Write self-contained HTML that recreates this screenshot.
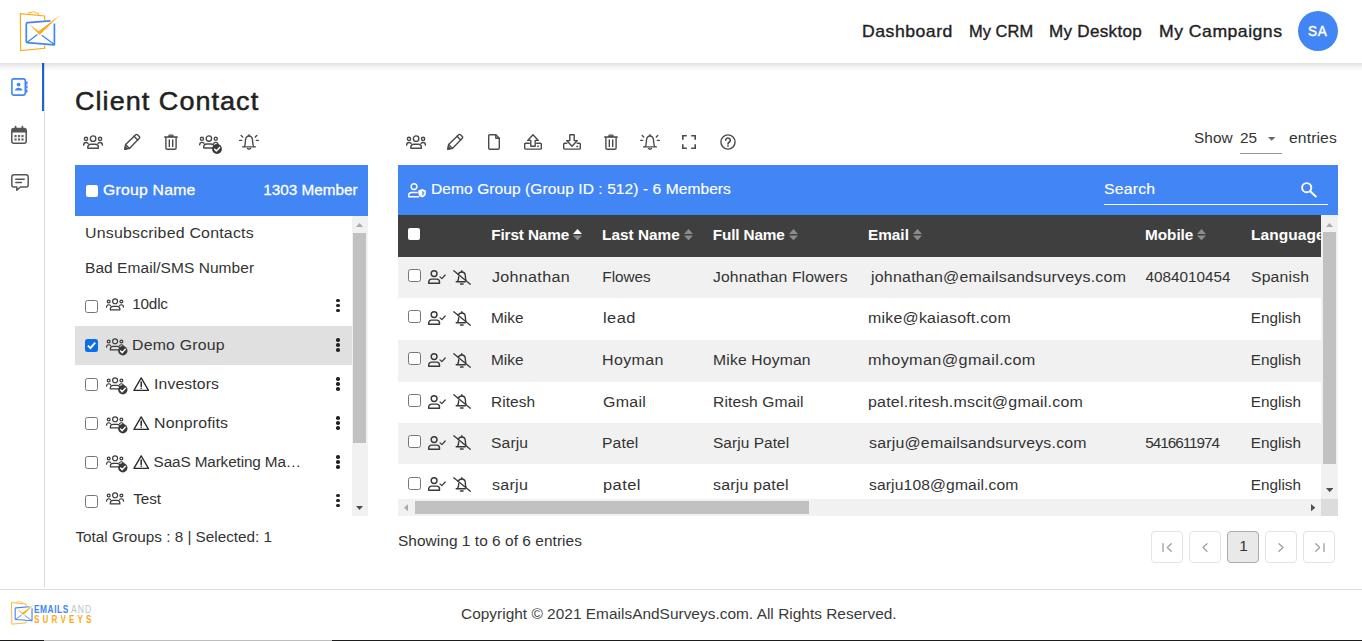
<!DOCTYPE html>
<html lang="en"><head><meta charset="utf-8"><title>Client Contact</title>
<style>
*{box-sizing:border-box;margin:0;padding:0}
html,body{width:1362px;height:641px;overflow:hidden;background:#fff}
body{position:relative;font-family:"Liberation Sans",sans-serif;color:#333}
.abs{position:absolute}
.t{position:absolute;z-index:5;transform-origin:0 0;white-space:pre;line-height:1;display:block}
#header{position:absolute;left:-12px;top:0;width:1386px;height:63px;background:#fff;box-shadow:0 1px 8px rgba(0,0,0,.2);z-index:3}
#avatar{position:absolute;left:1310px;top:11px;width:40px;height:40px;border-radius:50%;background:#4285f4}
#sidebar{position:absolute;left:0;top:63px;width:45px;height:524px;border-right:1px solid #dcdcdc;background:#fff}
#active{position:absolute;left:42.200px;top:63px;width:2.300px;height:48px;background:#1766d1;z-index:2}
.ico{position:absolute;overflow:visible;fill:none;stroke:#4a4a4a;stroke-width:1.4;stroke-linecap:round;stroke-linejoin:round}
.blue{background:#4285f4}
#lhead{position:absolute;left:75px;top:165px;width:293px;height:51px}
#rhead{position:absolute;left:398px;top:165px;width:940px;height:50px}
.cb{position:absolute;width:13px;height:13px;border:1px solid #767676;border-radius:2.5px;background:#fff}
.cbw{position:absolute;width:12px;height:12px;border-radius:2px;background:#fff}
.cbc{position:absolute;width:13px;height:13px;border-radius:2.5px;background:#0b6fe6}
#lsel{position:absolute;left:75px;top:326px;width:277px;height:39px;background:#e0e0e0}
.sbv{position:absolute;background:#f1f1f1}
.thumb{position:absolute;background:#c1c1c1}
.dots{position:absolute;width:4px}
.dots i{display:block;width:3.6px;height:3.6px;border-radius:50%;background:#222;margin-bottom:1.4px}
#thead{position:absolute;left:398px;top:215px;width:923px;height:42px;background:#3f3f3f}
.row{position:absolute;left:398px;width:923px;background:#f1f1f1}
.pg{position:absolute;top:531px;width:32px;height:32px;border:1px solid #e3e3e3;border-radius:4px;background:#fff}
.pg.cur{background:#e9e9e9;border-color:#ababab}
#footer{position:absolute;left:0;top:589px;width:1362px;height:52px;border-top:1px solid #dedede;background:#fff}

</style></head>
<body>
<svg width="0" height="0" style="position:absolute">
 <defs>
  <symbol id="i-users" viewBox="0 0 20 14" overflow="visible">
   <circle cx="10.1" cy="3.65" r="2.75"/>
   <path d="M4.8 13.3v-1a3.1 3.1 0 0 1 3.1-3.1h4.4a3.1 3.1 0 0 1 3.1 3.1v1z"/>
   <circle cx="3" cy="3.9" r="1.6"/><circle cx="17.1" cy="3.9" r="1.6"/>
   <path d="M.6 10.1Q.8 7.5 3 7.5Q4.3 7.5 5.1 8.4"/><path d="M19.5 10.1Q19.3 7.5 17.1 7.5Q15.8 7.5 15 8.4"/>
  </symbol>
  <symbol id="i-pencil" viewBox="0 0 16 16" overflow="visible">
   <path d="M.8 15.2l.8-4.600L11.700.700a1.200 1.200 0 0 1 1.700 0l1.900 1.900a1.200 1.200 0 0 1 0 1.700L5.400 14.400z"/>
   <path d="M1.600 10.600l3.800 3.800M10 2.300l3.700 3.700"/><path d="M.9 15.100l.5-2.300 1.800 1.800z" fill="#4a4a4a"/>
  </symbol>
  <symbol id="i-trash" viewBox="0 0 14 16" overflow="visible">
   <path d="M.7 3h12.6M1.9 3.2V14a1.3 1.3 0 0 0 1.3 1.3h7.6a1.3 1.3 0 0 0 1.3-1.3V3.2"/>
   <path d="M4.6 2.6l.6-1.6h3.6l.6 1.6z" fill="#9c9c9c" stroke-width="1.1"/>
   <path d="M5.3 6v6.6M8.7 6v6.6"/>
  </symbol>
  <symbol id="i-bell" viewBox="0 0 20 16" overflow="visible">
   <path d="M3.6 12.9h12.8M5.2 12.7c1.3-1.6 1-4.2 1.3-6.8C6.8 3.6 8.3 2 10 2s3.200 1.600 3.500 3.900c.3 2.600 0 5.200 1.300 6.800"/>
   <path d="M10 .6V2M8.500 14.500q1.500 1.300 3 0" stroke-width="1.300"/>
   <path d="M.7 6.400h2M17.300 6.400h2M2.200 1.400l1.500 1.500M17.800 1.400l-1.500 1.500"/>
  </symbol>
  <symbol id="i-file" viewBox="0 0 12 16" overflow="visible">
   <path d="M.7 1.800a1.100 1.100 0 0 1 1.100-1.100h6l3.500 3.500v9.900a1.100 1.100 0 0 1-1.100 1.100H1.800a1.100 1.100 0 0 1-1.100-1.100z"/>
   <path d="M7.800.9v3.300h3.300"/>
  </symbol>
  <symbol id="i-upload" viewBox="0 0 18 16" overflow="visible">
   <path d="M1.600 9.300h3.700M12.700 9.300h3.700a.9.9 0 0 1 .9.900v4a.9.900 0 0 1-.9.900H1.600a.9.900 0 0 1-.9-.9v-4a.9.900 0 0 1 .9-.9"/>
   <path d="M9 .8l5.300 5.600h-3.100v5.800H6.800V6.400H3.700z"/>
   <path d="M13.700 12.300h.6" />
  </symbol>
  <symbol id="i-download" viewBox="0 0 18 16" overflow="visible">
   <path d="M1.600 9.300h2.200M14.200 9.300h2.200a.9.900 0 0 1 .9.900v4a.9.900 0 0 1-.9.900H1.600a.9.900 0 0 1-.9-.9v-4a.9.900 0 0 1 .9-.9"/>
   <path d="M9 12.200L3.700 6.600h3.100V.8h4.400v5.800h3.100z"/>
   <path d="M13.900 12.500h.6" />
  </symbol>
  <symbol id="i-full" viewBox="0 0 14 14" overflow="visible">
   <path d="M.8 4.800V.8h4M9.200.8h4v4M13.200 9.200v4h-4M4.800 13.200h-4v-4" stroke-linecap="butt" stroke-linejoin="miter"/>
  </symbol>
  <symbol id="i-help" viewBox="0 0 16 16" overflow="visible">
   <circle cx="8" cy="8" r="7.100"/>
   <path d="M5.700 6.300a2.300 2.300 0 1 1 3.500 2c-.8.500-1.200.9-1.200 1.800" stroke-width="1.600"/>
   <circle cx="8" cy="12.100" r=".9" fill="#4a4a4a" stroke="none"/>
  </symbol>
  <symbol id="i-badge" viewBox="0 0 10 10" overflow="visible">
   <circle cx="5" cy="5" r="4.900" fill="#3a3a3a" stroke="none"/>
   <path d="M2.700 5.200l1.700 1.700L7.600 3.500" stroke="#fff" stroke-width="1.500" fill="none"/>
  </symbol>
  <symbol id="i-warn" viewBox="0 0 16 14" overflow="visible">
   <path d="M8 .9L15.100 13H.9z" stroke-width="1.300"/>
   <path d="M8 5v4.200" stroke-width="1.500"/><circle cx="8" cy="11" r=".8" fill="#333" stroke="none"/>
  </symbol>
  <symbol id="i-ucheck" viewBox="0 0 18 14" overflow="visible">
   <circle cx="6.100" cy="3.600" r="2.900"/>
   <path d="M.7 13.200v-1.300a2.800 2.800 0 0 1 2.800-2.800h5.200a2.800 2.800 0 0 1 2.800 2.800v1.300z"/>
   <path d="M12 6.800l1.900 1.900L17.200 5" stroke-width="1.200"/>
  </symbol>
  <symbol id="i-belloff" viewBox="0 0 18 15" overflow="visible">
   <path d="M5.200 4.600C5.700 3 7.200 2 8.800 2c2 0 3.300 1.500 3.500 3.500.2 1.700.1 3.300.6 4.700M12.300 11.700H3.200M4.600 11.500c1-1.300 1-3 1.100-4.800"/>
   <path d="M8.800.7V2M7.500 14h2.600"/>
   <path d="M.8.800l16.500 13.400" stroke-width="1.300"/>
  </symbol>
 </defs>
</svg>

<div id="header">
 <svg class="abs" style="left:30px;top:8px" width="46" height="46" viewBox="18 8 46 46">
  <path d="M20.300 13.600L20.700 50.500L44.600 48.300V45.500M44.600 20.500V16L20.300 13.600" fill="none" stroke="#fbab18" stroke-width="1.200" stroke-linejoin="miter"/>
  <path d="M28.600 14.200l.3-1.900 3.100.3c.3-1.500 2.700-1.300 2.900.3l3.600.4.300 1.800" fill="none" stroke="#fbab18" stroke-width=".9"/>
  <path d="M50.400 20.800L27.600 22.700Q26.300 22.900 26.300 24.200V41.400Q26.300 42.500 27.400 42.600L54.400 44.800V23.500" fill="none" stroke="#4285f4" stroke-width="1.700" stroke-linejoin="round"/>
  <path d="M27.200 42.300L37.400 34.600M54 44.300L41.800 35.200" fill="none" stroke="#4285f4" stroke-width="1.300"/>
  <path d="M28.800 23.600L38.600 31.200L59.800 15.300L39.600 35z" fill="#fbab18"/>
 </svg>
 <div id="avatar"></div>
</div>

<div id="sidebar"></div>
<div id="active"></div>
<!-- sidebar icons -->
<svg class="ico" style="left:11px;top:78px;stroke:#4285f4;stroke-width:1.600" width="17" height="18" viewBox="0 0 17 18">
 <rect x=".9" y=".9" width="13.400" height="16.200" rx="2"/>
 <path d="M15.800 4v2M15.800 8v2M15.800 12v2" stroke-width="1.500"/>
 <circle cx="7.600" cy="6.600" r="1.900" fill="#4285f4" stroke="none"/>
 <path d="M4 12.600c0-2 1.600-2.800 3.600-2.800s3.600.8 3.600 2.800z" fill="#4285f4" stroke="none"/>
</svg>
<svg class="ico" style="left:11px;top:126px;stroke:#555;stroke-width:1.500" width="16" height="18" viewBox="0 0 16 18">
 <rect x=".8" y="2.600" width="14.400" height="14.600" rx="2"/>
 <path d="M.8 5.800h14.400" />
 <path d="M1.200 3h13.600v2.600H1.200z" fill="#555" stroke="none"/>
 <path d="M4.600.6v3M11.400.6v3" stroke-width="1.700"/>
 <g fill="#666" stroke="none"><rect x="3.400" y="9" width="2.200" height="2.200"/><rect x="6.900" y="9" width="2.200" height="2.200"/><rect x="10.400" y="9" width="2.200" height="2.200"/><rect x="3.400" y="12.400" width="2.200" height="2.200"/><rect x="6.900" y="12.400" width="2.200" height="2.200"/><rect x="10.400" y="12.400" width="2.200" height="2.200"/></g>
</svg>
<svg class="ico" style="left:11px;top:173.500px;stroke:#555;stroke-width:1.500" width="18" height="17" viewBox="0 0 18 17">
 <path d="M2.800.8h12.400a2 2 0 0 1 2 2v8.200a2 2 0 0 1-2 2H9.400L5.800 16.200V13h-3a2 2 0 0 1-2-2V2.800a2 2 0 0 1 2-2z"/>
 <path d="M4.800 5.200h8.400M4.800 8.400h5.600"/>
</svg>

<!-- left toolbar -->
<svg class="ico" style="left:83px;top:134.600px" width="20" height="14"><use href="#i-users"/></svg>
<svg class="ico" style="left:124px;top:134px" width="16" height="16"><use href="#i-pencil"/></svg>
<svg class="ico" style="left:164px;top:134px" width="14" height="16"><use href="#i-trash"/></svg>
<svg class="ico" style="left:199.300px;top:134.600px" width="19.600" height="13.700"><use href="#i-users"/></svg>
<svg class="ico" style="left:211.900px;top:144.100px" width="10" height="10"><use href="#i-badge"/></svg>
<svg class="ico" style="left:239px;top:134px" width="20" height="16"><use href="#i-bell"/></svg>

<!-- left panel -->
<div id="lhead" class="blue"></div>
<div class="cbw" style="left:85.600px;top:184.700px"></div>
<div id="lsel"></div>
<div class="sbv" style="left:351.500px;top:216px;width:16.500px;height:300px"></div>
<div class="thumb" style="left:352.800px;top:233px;width:13.300px;height:210px"></div>
<svg class="abs" style="left:355.800px;top:223px" width="7" height="4"><path d="M0 4L3.500 0L7 4z" fill="#a9a9a9"/></svg>
<svg class="abs" style="left:355.800px;top:506px" width="7" height="4"><path d="M0 0L3.500 4L7 0z" fill="#505050"/></svg>

<div id="listicons">
<div class="cb" style="left:85px;top:299.9px"></div>
<svg class="ico" style="left:106.2px;top:297.6px;stroke-width:1.35;stroke:#3c3c3c" width="18" height="12.600"><use href="#i-users"/></svg>
<div class="dots" style="left:336.400px;top:298.6px"><i></i><i></i><i></i></div>
<div class="cbc" style="left:85px;top:338.7px"><svg width="13" height="13" viewBox="0 0 13 13" style="position:absolute;left:0;top:0"><path d="M2.900 6.700l2.500 2.500L10.200 3.600" fill="none" stroke="#fff" stroke-width="1.900"/></svg></div>
<svg class="ico" style="left:106.2px;top:338.3px;stroke-width:1.35;stroke:#3c3c3c" width="18" height="12.600"><use href="#i-users"/></svg>
<svg class="ico" style="left:117.700px;top:345.6px" width="9.600" height="9.600"><use href="#i-badge"/></svg>
<div class="dots" style="left:336.400px;top:338.2px"><i></i><i></i><i></i></div>
<div class="cb" style="left:85px;top:377.8px"></div>
<svg class="ico" style="left:106.2px;top:377.4px;stroke-width:1.35;stroke:#3c3c3c" width="18" height="12.600"><use href="#i-users"/></svg>
<svg class="ico" style="left:117.700px;top:384.7px" width="9.600" height="9.600"><use href="#i-badge"/></svg>
<svg class="ico" style="left:132.700px;top:376.6px;stroke:#2a2a2a" width="16.400" height="14.350"><use href="#i-warn"/></svg>
<div class="dots" style="left:336.400px;top:377.3px"><i></i><i></i><i></i></div>
<div class="cb" style="left:85px;top:416.8px"></div>
<svg class="ico" style="left:106.2px;top:416.4px;stroke-width:1.35;stroke:#3c3c3c" width="18" height="12.600"><use href="#i-users"/></svg>
<svg class="ico" style="left:117.700px;top:423.7px" width="9.600" height="9.600"><use href="#i-badge"/></svg>
<svg class="ico" style="left:132.700px;top:415.6px;stroke:#2a2a2a" width="16.400" height="14.350"><use href="#i-warn"/></svg>
<div class="dots" style="left:336.400px;top:416.3px"><i></i><i></i><i></i></div>
<div class="cb" style="left:85px;top:455.8px"></div>
<svg class="ico" style="left:106.2px;top:455.4px;stroke-width:1.35;stroke:#3c3c3c" width="18" height="12.600"><use href="#i-users"/></svg>
<svg class="ico" style="left:117.700px;top:462.7px" width="9.600" height="9.600"><use href="#i-badge"/></svg>
<svg class="ico" style="left:132.700px;top:454.6px;stroke:#2a2a2a" width="16.400" height="14.350"><use href="#i-warn"/></svg>
<div class="dots" style="left:336.400px;top:455.3px"><i></i><i></i><i></i></div>
<div class="cb" style="left:85px;top:494.6px"></div>
<svg class="ico" style="left:106.2px;top:492.4px;stroke-width:1.35;stroke:#3c3c3c" width="18" height="12.600"><use href="#i-users"/></svg>
<div class="dots" style="left:336.400px;top:493.6px"><i></i><i></i><i></i></div>
</div>

<!-- right toolbar -->
<svg class="ico" style="left:406px;top:134.600px" width="20" height="14"><use href="#i-users"/></svg>
<svg class="ico" style="left:447px;top:134px" width="16" height="16"><use href="#i-pencil"/></svg>
<svg class="ico" style="left:488px;top:134.200px" width="12" height="16"><use href="#i-file"/></svg>
<svg class="ico" style="left:524px;top:134px" width="18" height="16"><use href="#i-upload"/></svg>
<svg class="ico" style="left:563px;top:134px" width="18" height="16"><use href="#i-download"/></svg>
<svg class="ico" style="left:604px;top:134px" width="14" height="16"><use href="#i-trash"/></svg>
<svg class="ico" style="left:640px;top:134px" width="20" height="16"><use href="#i-bell"/></svg>
<svg class="ico" style="left:682px;top:135.200px;stroke-width:1.600" width="14" height="14"><use href="#i-full"/></svg>
<svg class="ico" style="left:720px;top:133.800px" width="16" height="16"><use href="#i-help"/></svg>

<!-- show entries -->
<svg class="abs" style="left:1267.500px;top:137.400px" width="8" height="4"><path d="M0 0h7.400L3.700 3.800z" fill="#666"/></svg>
<div class="abs" style="left:1240px;top:152.600px;width:42px;height:1px;background:#949494"></div>

<!-- right panel -->
<div id="rhead" class="blue"></div>
<svg class="ico" style="left:408px;top:182.800px;stroke:#fff;stroke-width:1.400" width="18" height="14.500" viewBox="0 0 18 14.500">
 <circle cx="6" cy="3.600" r="2.900"/>
 <path d="M.7 13.700v-1.400a2.800 2.800 0 0 1 2.800-2.800h5.700M.7 13.700h9.900"/>
 <path d="M14.100 6.100l3.800 1.400v2.700c0 2.100-1.600 3.500-3.800 4.300-2.200-.8-3.800-2.200-3.800-4.300V7.500z" fill="#fff" stroke="none"/>
 <path d="M14.100 7.900v4.800c1.200-.5 2.200-1.400 2.200-2.700V8.700z" fill="#6fa3f7" stroke="none"/>
</svg>
<div class="abs" style="left:1104px;top:203.500px;width:224px;height:1.300px;background:#fff"></div>
<svg class="ico" style="left:1300.500px;top:182.300px;stroke:#fff;stroke-width:1.900" width="16" height="15" viewBox="0 0 16 15"><circle cx="5.700" cy="5.700" r="4.600"/><path d="M9.200 9.200l5.600 5.200" stroke-width="2.100"/></svg>

<div id="thead"></div>
<div class="cbw" style="left:408.400px;top:227.500px"></div>
<div class="row" style="top:257px;height:41.400px"></div>
<div class="row" style="top:339.900px;height:41.700px"></div>
<div class="row" style="top:422.900px;height:41.600px"></div>

<div id="rowicons">
<div class="cb" style="left:408.2px;top:269.3px"></div>
<svg class="ico" style="left:428.4px;top:270.0px;stroke:#383838;stroke-width:1.45" width="18" height="14"><use href="#i-ucheck"/></svg>
<svg class="ico" style="left:453.4px;top:269.5px;stroke:#383838;stroke-width:1.4" width="18" height="15"><use href="#i-belloff"/></svg>
<div class="cb" style="left:408.2px;top:310.3px"></div>
<svg class="ico" style="left:428.4px;top:311.0px;stroke:#383838;stroke-width:1.45" width="18" height="14"><use href="#i-ucheck"/></svg>
<svg class="ico" style="left:453.4px;top:310.5px;stroke:#383838;stroke-width:1.4" width="18" height="15"><use href="#i-belloff"/></svg>
<div class="cb" style="left:408.2px;top:352.3px"></div>
<svg class="ico" style="left:428.4px;top:353.0px;stroke:#383838;stroke-width:1.45" width="18" height="14"><use href="#i-ucheck"/></svg>
<svg class="ico" style="left:453.4px;top:352.5px;stroke:#383838;stroke-width:1.4" width="18" height="15"><use href="#i-belloff"/></svg>
<div class="cb" style="left:408.2px;top:394.1px"></div>
<svg class="ico" style="left:428.4px;top:394.8px;stroke:#383838;stroke-width:1.45" width="18" height="14"><use href="#i-ucheck"/></svg>
<svg class="ico" style="left:453.4px;top:394.3px;stroke:#383838;stroke-width:1.4" width="18" height="15"><use href="#i-belloff"/></svg>
<div class="cb" style="left:408.2px;top:435.2px"></div>
<svg class="ico" style="left:428.4px;top:435.9px;stroke:#383838;stroke-width:1.45" width="18" height="14"><use href="#i-ucheck"/></svg>
<svg class="ico" style="left:453.4px;top:435.4px;stroke:#383838;stroke-width:1.4" width="18" height="15"><use href="#i-belloff"/></svg>
<div class="cb" style="left:408.2px;top:476.7px"></div>
<svg class="ico" style="left:428.4px;top:477.4px;stroke:#383838;stroke-width:1.45" width="18" height="14"><use href="#i-ucheck"/></svg>
<svg class="ico" style="left:453.4px;top:476.9px;stroke:#383838;stroke-width:1.4" width="18" height="15"><use href="#i-belloff"/></svg>
</div>
<div id="sorticons">
<svg class="abs" style="left:573.4px;top:229px" width="9" height="11.4" viewBox="0 0 9 11.4"><path d="M0 5L4.500 0L9 5z" fill="#fff"/><path d="M0 6.400L4.500 11.400L9 6.400z" fill="#8c8c8c"/></svg>
<svg class="abs" style="left:683.6px;top:229px" width="9" height="11.4" viewBox="0 0 9 11.4"><path d="M0 5L4.500 0L9 5z" fill="#8c8c8c"/><path d="M0 6.400L4.500 11.400L9 6.400z" fill="#8c8c8c"/></svg>
<svg class="abs" style="left:789.2px;top:229px" width="9" height="11.4" viewBox="0 0 9 11.4"><path d="M0 5L4.500 0L9 5z" fill="#8c8c8c"/><path d="M0 6.400L4.500 11.400L9 6.400z" fill="#8c8c8c"/></svg>
<svg class="abs" style="left:912.5px;top:229px" width="9" height="11.4" viewBox="0 0 9 11.4"><path d="M0 5L4.500 0L9 5z" fill="#8c8c8c"/><path d="M0 6.400L4.500 11.400L9 6.400z" fill="#8c8c8c"/></svg>
<svg class="abs" style="left:1197.2px;top:229px" width="9" height="11.4" viewBox="0 0 9 11.4"><path d="M0 5L4.500 0L9 5z" fill="#8c8c8c"/><path d="M0 6.400L4.500 11.400L9 6.400z" fill="#8c8c8c"/></svg>
</div>

<!-- scrollbars -->
<div class="sbv" style="left:1321px;top:215px;width:17px;height:284px"></div>
<div class="thumb" style="left:1323.300px;top:232.300px;width:12.700px;height:231.400px"></div>
<svg class="abs" style="left:1326.200px;top:222.600px" width="7" height="4"><path d="M0 4L3.500 0L7 4z" fill="#a9a9a9"/></svg>
<svg class="abs" style="left:1326px;top:487.600px" width="7.400" height="4.200"><path d="M0 0L3.700 4.200L7.400 0z" fill="#505050"/></svg>
<div class="sbv" style="left:398px;top:499px;width:923px;height:17px"></div>
<div class="abs" style="left:1321px;top:499px;width:17px;height:17px;background:#dcdcdc"></div>
<div class="thumb" style="left:414.800px;top:501.300px;width:394.500px;height:12.400px"></div>
<svg class="abs" style="left:404px;top:504px" width="4.200" height="7.400"><path d="M4.200 0L0 3.700L4.200 7.400z" fill="#a9a9a9"/></svg>
<svg class="abs" style="left:1310.800px;top:504px" width="4.200" height="7.400"><path d="M0 0L4.200 3.700L0 7.400z" fill="#505050"/></svg>

<!-- pagination -->
<div class="pg" style="left:1151px"></div>
<div class="pg" style="left:1189px"></div>
<div class="pg cur" style="left:1227px"></div>
<div class="pg" style="left:1265px"></div>
<div class="pg" style="left:1303px"></div>
<svg class="ico" style="left:1161.700px;top:542.600px;stroke:#9e9e9e;stroke-width:1.300" width="11" height="9" viewBox="0 0 11 9"><path d="M1 .6v7.800M9.300 .8L5.300 4.500l4 3.700"/></svg>
<svg class="ico" style="left:1202px;top:542.600px;stroke:#9e9e9e;stroke-width:1.300" width="6" height="9" viewBox="0 0 6 9"><path d="M5 .8L1 4.500l4 3.700"/></svg>
<svg class="ico" style="left:1278px;top:542.600px;stroke:#9e9e9e;stroke-width:1.300" width="6" height="9" viewBox="0 0 6 9"><path d="M1 .8L5 4.500L1 8.200"/></svg>
<svg class="ico" style="left:1313.800px;top:542.600px;stroke:#9e9e9e;stroke-width:1.300" width="11" height="9" viewBox="0 0 11 9"><path d="M10 .6v7.800M1.700 .8l4 3.700-4 3.700"/></svg>

<div id="footer"></div>
<svg class="abs" style="left:9px;top:599px" width="30" height="28" viewBox="0 0 30 28">
 <g transform="translate(10.900 602.100) scale(.595) translate(-20.200 -13.500) translate(-15.130 -1006.900)" >
 </g>
 <g transform="translate(2.500 3.500) scale(.6 .585) translate(-20.200 -13.500)">
  <path d="M20.300 13.600L20.700 50.500L44.600 48.300V45.500M44.600 20.500V16L20.300 13.600" fill="none" stroke="#fbab18" stroke-width="1.400"/>
  <path d="M28.600 14.200l.3-1.900 3.100.3c.3-1.500 2.700-1.300 2.900.3l3.600.4.300 1.800" fill="none" stroke="#fbab18" stroke-width=".9"/>
  <path d="M50.400 20.800L27.600 22.700Q26.300 22.900 26.300 24.200V41.400Q26.300 42.500 27.400 42.600L54.400 44.800V23.500" fill="none" stroke="#4285f4" stroke-width="1.900" stroke-linejoin="round"/>
  <path d="M27.200 42.300L37.400 34.600M54 44.300L41.800 35.200" fill="none" stroke="#4285f4" stroke-width="1.400"/>
  <path d="M28.800 23.600L38.600 31.200L59.800 15.300L39.600 35z" fill="#fbab18"/>
 </g>
</svg>
<div class="abs" style="left:0;top:640px;width:1362px;height:1px;background:#1d1d1d"></div>
<div class="abs" style="left:44px;top:640px;width:288px;height:1px;background:#bdbdbd"></div>

<div id="texts">
<span class="t" style="left:861.95px;top:23.42px;font-size:16.4px;letter-spacing:0.472px;color:#222;-webkit-text-stroke:0.35px #222;transform:scaleX(1.0761);">Dashboard</span>
<span class="t" style="left:969.23px;top:23.42px;font-size:16.4px;letter-spacing:0.036px;color:#222;-webkit-text-stroke:0.35px #222;transform:scaleX(1.0043);">My CRM</span>
<span class="t" style="left:1049.03px;top:23.42px;font-size:16.4px;letter-spacing:0.265px;color:#222;-webkit-text-stroke:0.35px #222;transform:scaleX(1.0431);">My Desktop</span>
<span class="t" style="left:1158.75px;top:23.42px;font-size:16.4px;letter-spacing:0.462px;color:#222;-webkit-text-stroke:0.35px #222;transform:scaleX(1.0750);">My Campaigns</span>
<span class="t" style="left:1308.33px;top:24.41px;font-size:14.4px;letter-spacing:0.781px;color:#fff;-webkit-text-stroke:0.45px #fff;transform:scaleX(0.9400);">SA</span>
<span class="t" style="left:75.12px;top:89.24px;font-size:25.0px;letter-spacing:0.967px;color:#212121;-webkit-text-stroke:0.5px #212121;transform:scaleX(1.0800);">Client Contact</span>
<span class="t" style="left:103.05px;top:182.05px;font-size:15.3px;letter-spacing:0.203px;color:#fff;-webkit-text-stroke:0.3px #fff;transform:scaleX(1.0323);">Group Name</span>
<span class="t" style="left:263.21px;top:182.05px;font-size:15.3px;letter-spacing:-0.004px;color:#fff;-webkit-text-stroke:0.3px #fff;">1303 Member</span>
<span class="t" style="left:85.14px;top:225.05px;font-size:15.3px;letter-spacing:0.202px;color:#333;transform:scaleX(1.0399);">Unsubscribed Contacts</span>
<span class="t" style="left:85.09px;top:260.05px;font-size:15.3px;letter-spacing:0.068px;color:#333;transform:scaleX(1.0119);">Bad Email/SMS Number</span>
<span class="t" style="left:132.24px;top:296.30px;font-size:15.3px;letter-spacing:-0.204px;color:#333;">10dlc</span>
<span class="t" style="left:132.04px;top:336.95px;font-size:15.3px;letter-spacing:0.219px;color:#333;transform:scaleX(1.0350);">Demo Group</span>
<span class="t" style="left:153.58px;top:376.05px;font-size:15.3px;letter-spacing:0.138px;color:#333;transform:scaleX(1.0274);">Investors</span>
<span class="t" style="left:153.83px;top:415.05px;font-size:15.3px;letter-spacing:0.184px;color:#333;transform:scaleX(1.0370);">Nonprofits</span>
<span class="t" style="left:153.57px;top:454.05px;font-size:15.3px;letter-spacing:-0.120px;color:#333;">SaaS Marketing Ma…</span>
<span class="t" style="left:133.13px;top:491.05px;font-size:15.3px;letter-spacing:-0.063px;color:#333;">Test</span>
<span class="t" style="left:75.44px;top:528.85px;font-size:15.3px;letter-spacing:-0.015px;color:#333;">Total Groups : 8 | Selected: 1</span>
<span class="t" style="left:1193.53px;top:130.35px;font-size:15.3px;letter-spacing:0.040px;color:#333;transform:scaleX(1.0047);">Show</span>
<span class="t" style="left:1240.30px;top:130.35px;font-size:15.3px;letter-spacing:0.033px;color:#333;transform:scaleX(1.0029);">25</span>
<span class="t" style="left:1289.35px;top:130.35px;font-size:15.3px;letter-spacing:0.120px;color:#333;transform:scaleX(1.0240);">entries</span>
<span class="t" style="left:431.17px;top:181.45px;font-size:15.3px;letter-spacing:0.077px;color:#fff;-webkit-text-stroke:0.15px #fff;transform:scaleX(1.0152);">Demo Group (Group ID : 512) - 6 Members</span>
<span class="t" style="left:1104.36px;top:181.45px;font-size:15.3px;letter-spacing:0.204px;color:#fff;-webkit-text-stroke:0.15px #fff;transform:scaleX(1.0326);">Search</span>
<span class="t" style="left:491.29px;top:227.25px;font-size:15.3px;letter-spacing:-0.126px;color:#fff;font-weight:700;">First Name</span>
<span class="t" style="left:602.09px;top:227.25px;font-size:15.3px;letter-spacing:0.022px;color:#fff;font-weight:700;transform:scaleX(1.0034);">Last Name</span>
<span class="t" style="left:712.75px;top:227.25px;font-size:15.3px;letter-spacing:-0.140px;color:#fff;font-weight:700;">Full Name</span>
<span class="t" style="left:868.30px;top:227.25px;font-size:15.3px;letter-spacing:0.007px;color:#fff;font-weight:700;transform:scaleX(1.0011);">Email</span>
<span class="t" style="left:1145.10px;top:227.25px;font-size:15.3px;letter-spacing:-0.043px;color:#fff;font-weight:700;">Mobile</span>
<span class="t" style="left:1250.50px;top:227.25px;font-size:15.3px;letter-spacing:0.073px;color:#fff;font-weight:700;width:69.0px;overflow:hidden;transform:scaleX(1.0108);">Language</span>
<span class="t" style="left:491.95px;top:269.45px;font-size:15.3px;letter-spacing:0.292px;color:#333;transform:scaleX(1.0516);">Johnathan</span>
<span class="t" style="left:602.36px;top:269.45px;font-size:15.3px;letter-spacing:-0.048px;color:#333;">Flowes</span>
<span class="t" style="left:713.37px;top:269.45px;font-size:15.3px;letter-spacing:0.130px;color:#333;transform:scaleX(1.0246);">Johnathan Flowers</span>
<span class="t" style="left:870.50px;top:269.45px;font-size:15.3px;letter-spacing:0.220px;color:#333;transform:scaleX(1.0419);">johnathan@emailsandsurveys.com</span>
<span class="t" style="left:1145.57px;top:269.45px;font-size:15.3px;letter-spacing:-0.015px;color:#333;">4084010454</span>
<span class="t" style="left:1250.90px;top:269.45px;font-size:15.3px;letter-spacing:0.176px;color:#333;transform:scaleX(1.0295);">Spanish</span>
<span class="t" style="left:491.22px;top:310.45px;font-size:15.3px;letter-spacing:0.042px;color:#333;transform:scaleX(1.0060);">Mike</span>
<span class="t" style="left:602.50px;top:310.45px;font-size:15.3px;letter-spacing:0.435px;color:#333;transform:scaleX(1.0726);">lead</span>
<span class="t" style="left:868.30px;top:310.45px;font-size:15.3px;letter-spacing:0.216px;color:#333;transform:scaleX(1.0403);">mike@kaiasoft.com</span>
<span class="t" style="left:1250.76px;top:310.45px;font-size:15.3px;letter-spacing:0.004px;color:#333;">English</span>
<span class="t" style="left:491.22px;top:352.45px;font-size:15.3px;letter-spacing:0.042px;color:#333;transform:scaleX(1.0060);">Mike</span>
<span class="t" style="left:602.20px;top:352.45px;font-size:15.3px;letter-spacing:0.344px;color:#333;transform:scaleX(1.0474);">Hoyman</span>
<span class="t" style="left:712.85px;top:352.45px;font-size:15.3px;letter-spacing:0.157px;color:#333;transform:scaleX(1.0259);">Mike Hoyman</span>
<span class="t" style="left:868.30px;top:352.45px;font-size:15.3px;letter-spacing:0.353px;color:#333;transform:scaleX(1.0589);">mhoyman@gmail.com</span>
<span class="t" style="left:1250.76px;top:352.45px;font-size:15.3px;letter-spacing:0.004px;color:#333;">English</span>
<span class="t" style="left:491.22px;top:394.25px;font-size:15.3px;letter-spacing:0.050px;color:#333;transform:scaleX(1.0088);">Ritesh</span>
<span class="t" style="left:602.50px;top:394.25px;font-size:15.3px;letter-spacing:0.278px;color:#333;transform:scaleX(1.0436);">Gmail</span>
<span class="t" style="left:712.89px;top:394.25px;font-size:15.3px;letter-spacing:0.107px;color:#333;transform:scaleX(1.0207);">Ritesh Gmail</span>
<span class="t" style="left:868.30px;top:394.25px;font-size:15.3px;letter-spacing:0.211px;color:#333;transform:scaleX(1.0445);">patel.ritesh.mscit@gmail.com</span>
<span class="t" style="left:1250.76px;top:394.25px;font-size:15.3px;letter-spacing:0.004px;color:#333;">English</span>
<span class="t" style="left:490.51px;top:435.35px;font-size:15.3px;letter-spacing:0.127px;color:#333;transform:scaleX(1.0217);">Sarju</span>
<span class="t" style="left:602.25px;top:435.35px;font-size:15.3px;letter-spacing:0.135px;color:#333;transform:scaleX(1.0238);">Patel</span>
<span class="t" style="left:712.94px;top:435.35px;font-size:15.3px;letter-spacing:0.054px;color:#333;transform:scaleX(1.0109);">Sarju Patel</span>
<span class="t" style="left:869.45px;top:435.35px;font-size:15.3px;letter-spacing:0.205px;color:#333;transform:scaleX(1.0392);">sarju@emailsandsurveys.com</span>
<span class="t" style="left:1145.22px;top:435.35px;font-size:15.3px;letter-spacing:-1.004px;color:#333;">5416611974</span>
<span class="t" style="left:1250.76px;top:435.35px;font-size:15.3px;letter-spacing:0.004px;color:#333;">English</span>
<span class="t" style="left:491.85px;top:476.85px;font-size:15.3px;letter-spacing:0.258px;color:#333;transform:scaleX(1.0489);">sarju</span>
<span class="t" style="left:602.50px;top:476.85px;font-size:15.3px;letter-spacing:0.394px;color:#333;transform:scaleX(1.0767);">patel</span>
<span class="t" style="left:713.25px;top:476.85px;font-size:15.3px;letter-spacing:0.193px;color:#333;transform:scaleX(1.0428);">sarju patel</span>
<span class="t" style="left:869.46px;top:476.85px;font-size:15.3px;letter-spacing:0.126px;color:#333;transform:scaleX(1.0229);">sarju108@gmail.com</span>
<span class="t" style="left:1250.76px;top:476.85px;font-size:15.3px;letter-spacing:0.004px;color:#333;">English</span>
<span class="t" style="left:398.13px;top:533.15px;font-size:15.3px;letter-spacing:0.042px;color:#333;transform:scaleX(1.0091);">Showing 1 to 6 of 6 entries</span>
<span class="t" style="left:1239.24px;top:538.25px;font-size:15.3px;letter-spacing:0.000px;color:#333;">1</span>
<span class="t" style="left:460.90px;top:606.05px;font-size:15.3px;letter-spacing:0.030px;color:#3a3a3a;transform:scaleX(1.0060);">Copyright © 2021 EmailsAndSurveys.com. All Rights Reserved.</span>
<span class="t" style="left:33.97px;top:604.67px;font-size:10.2px;letter-spacing:0.655px;color:#4285f4;font-weight:700;transform:scaleX(0.8200);">EMAILS</span>
<span class="t" style="left:71.38px;top:604.67px;font-size:10.2px;letter-spacing:1.105px;color:#bcc4cf;transform:scaleX(0.8500);">AND</span>
<span class="t" style="left:33.91px;top:614.50px;font-size:10.4px;letter-spacing:4.030px;color:#fbab18;font-weight:700;transform:scaleX(0.7800);">SURVEYS</span>
</div>
</body></html>
